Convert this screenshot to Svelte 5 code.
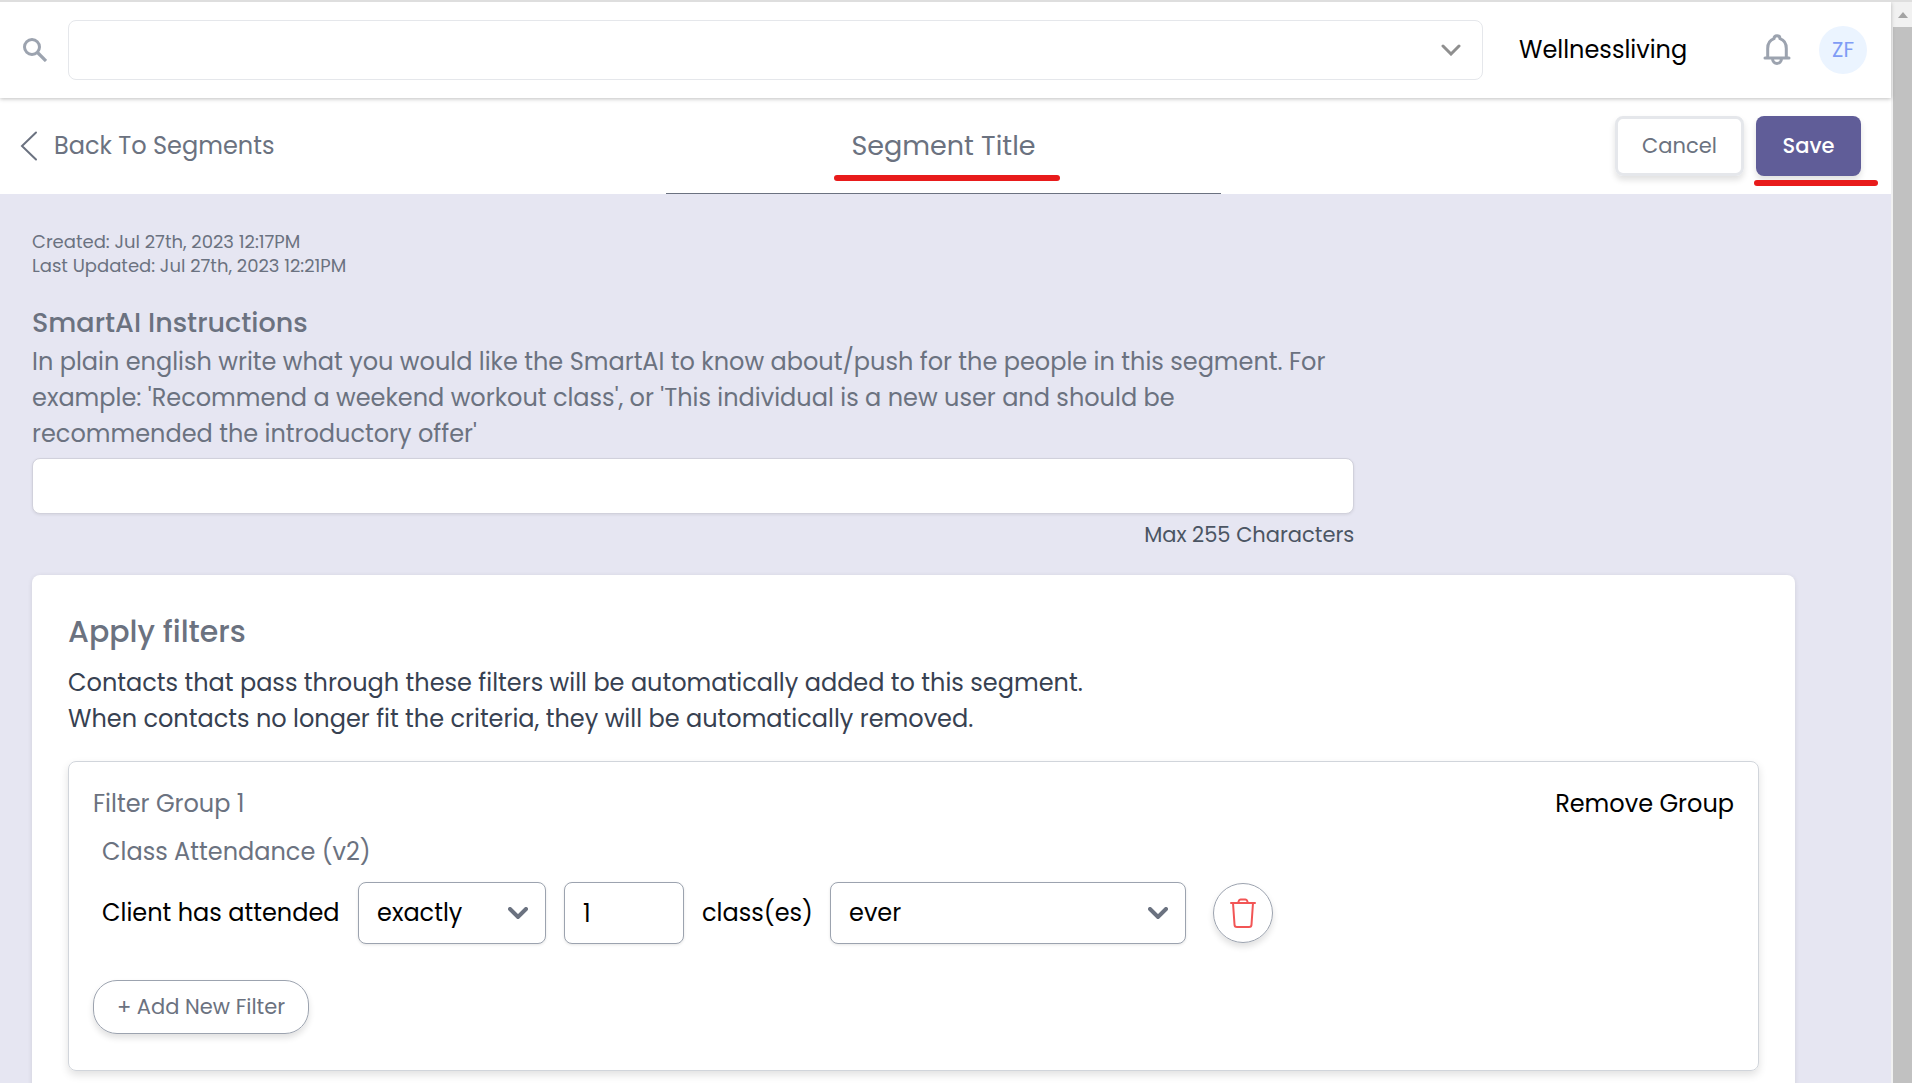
<script lang="ts">
  const account = 'Wellnessliving';
  const created = 'Jul 27th, 2023 12:17PM';
  const updated = 'Jul 27th, 2023 12:21PM';

  let search = $state('');
  let title = $state('Segment Title');
  let instructions = $state('');
  let comparison = $state('exactly');
  let amount = $state('1');
  let period = $state('ever');
</script>

{#snippet chevron()}
  <svg class="chevron" width="20" height="12" viewBox="0 0 20 12" aria-hidden="true">
    <path d="M2 2l8 8 8-8" fill="none" stroke="currentColor" />
  </svg>
{/snippet}

<div class="shell">
  <div class="page">
    <header class="topbar">
      <label class="search-icon" for="search" aria-label="Search">
        <svg width="24" height="24" viewBox="0 0 24 24" aria-hidden="true">
          <circle cx="9" cy="9" r="7.5" fill="none" stroke="currentColor" stroke-width="3" />
          <path d="M14.5 14.5l8.5 8.5" stroke="currentColor" stroke-width="3.2" />
        </svg>
      </label>
      <div class="search-box">
        <input id="search" type="text" bind:value={search} />
        {@render chevron()}
      </div>
      <span class="account">{account}</span>
      <button class="bell" aria-label="Notifications">
        <svg width="28" height="32" viewBox="0 0 28 32" aria-hidden="true">
          <path d="M2 24h24M4.7 24V14.500c0-5 2.500-8.500 6.300-9.800 0-4 6-4 6 0 3.800 1.300 6.300 4.800 6.300 9.800V24M9.500 24.500c0 6.500 9 6.500 9 0" fill="none" stroke="currentColor" stroke-width="3" stroke-linecap="round" stroke-linejoin="round" />
        </svg>
      </button>
      <button class="avatar">ZF</button>
    </header>

    <div class="titlebar">
      <a class="back" href="#segments">
        <svg width="18" height="30" viewBox="0 0 18 30" aria-hidden="true">
          <path d="M16 1.500L2 15l14 13.500" fill="none" stroke="currentColor" stroke-width="2" stroke-linecap="round" />
        </svg>
        Back To Segments
      </a>
      <div class="title-field">
        <input type="text" aria-label="Segment title" bind:value={title} />
        <span class="mark title-mark"></span>
      </div>
      <div class="actions">
        <button class="btn cancel">Cancel</button>
        <button class="btn save">Save<span class="mark save-mark"></span></button>
      </div>
    </div>

    <main>
      <div class="dates">
        <div>Created: {created}</div>
        <div>Last Updated: {updated}</div>
      </div>

      <section class="instructions">
        <h2><label for="instructions">SmartAI Instructions</label></h2>
        <p>
          In plain english write what you would like the SmartAI to know about/push for the people in this segment. For<br />
          example: 'Recommend a weekend workout class', or 'This individual is a new user and should be<br />
          recommended the introductory offer'
        </p>
        <input id="instructions" type="text" maxlength="255" bind:value={instructions} />
        <div class="hint">Max 255 Characters</div>
      </section>

      <section class="card">
        <h1>Apply filters</h1>
        <p>
          Contacts that pass through these filters will be automatically added to this segment.<br />
          When contacts no longer fit the criteria, they will be automatically removed.
        </p>

        <div class="group">
          <div class="group-head">
            <span>Filter Group 1</span>
            <button class="remove">Remove Group</button>
          </div>
          <div class="filter">
            <div class="filter-name">Class Attendance (v2)</div>
            <div class="filter-row">
              <label for="comparison">Client has attended</label>
              <div class="select comparison">
                <select id="comparison" bind:value={comparison}>
                  <option>exactly</option>
                </select>
                {@render chevron()}
              </div>
              <input id="amount" class="amount" type="text" inputmode="numeric" bind:value={amount} />
              <label for="amount">class(es)</label>
              <div class="select period">
                <select aria-label="Period" bind:value={period}>
                  <option>ever</option>
                </select>
                {@render chevron()}
              </div>
              <button class="trash" aria-label="Delete filter">
                <svg width="26" height="30" viewBox="0 0 26 30" aria-hidden="true">
                  <path d="M1 5h24M3 5l1.500 21.500c0 1.500 1 2.500 2.500 2.500h12c1.500 0 2.500-1 2.500-2.500L23 5M8 5l1-2.500q.5-1 1.500-1h5q1 0 1.500 1L18 5" fill="none" stroke="currentColor" stroke-width="2" stroke-linejoin="round" stroke-linecap="round" />
                </svg>
              </button>
            </div>
          </div>
          <button class="add">+ Add New Filter</button>
        </div>
      </section>
    </main>
  </div>

  <div class="scrollbar" aria-hidden="true">
    <svg width="10" height="6" viewBox="0 0 10 6"><path d="M5 0l5 6H0z" fill="#a3a3a3" /></svg>
    <div class="thumb"></div>
  </div>
</div>

<style>
  :global(body) { margin: 0; background: #e6e6f2; }

  .shell { display: flex; height: 100vh; box-sizing: border-box; border-top: 2px solid #dedede; overflow: hidden; font-family: Poppins, Inter, "Liberation Sans", sans-serif; font-size: 24px; line-height: 36px; color: #6b7280; }
  .shell * { box-sizing: border-box; }
  .page { flex: 1; min-width: 0; display: flex; flex-direction: column; white-space: nowrap; }

  input, select, button { margin: 0; font: inherit; color: inherit; border: 0; background: none; outline: none; }
  button, select { cursor: pointer; }
  svg { display: block; flex: none; }
  h1, h2, p { margin: 0; }

  .topbar { flex: none; position: relative; display: flex; align-items: center; height: 96px; padding: 0 24px 0 23px; background: #fff; box-shadow: 0 1px 4px rgba(0, 0, 0, 0.25); }
  .search-icon { margin-right: 21px; color: #9ca3af; }
  .search-box { flex: 1; display: flex; align-items: center; height: 60px; padding-right: 21px; border: 1px solid #e5e7eb; border-radius: 8px; }
  .search-box input { flex: 1; height: 100%; padding: 0 16px; }
  .chevron { stroke-width: 3px; stroke-linecap: round; }
  .search-box .chevron { color: #8f8f8f; }
  .account { width: 168px; margin: 0 76px 0 36px; color: #000; }
  .bell { padding: 0; margin-right: 28px; color: #9ca3af; }
  .avatar { width: 48px; height: 48px; padding: 0; border-radius: 50%; background: #ebf4ff; color: #7f9cf5; font-size: 21px; }

  .titlebar { flex: none; display: grid; grid-template-columns: 1fr 555px 1fr; align-items: center; height: 96px; padding: 0 24px 0 20px; background: #fff; }
  .back { display: flex; align-items: center; gap: 16px; color: inherit; text-decoration: none; }
  .title-field { position: relative; align-self: stretch; }
  .title-field input { width: 100%; height: 100%; padding: 0; border-bottom: 1px solid #6b7280; text-align: center; font-size: 27px; }
  .mark { position: absolute; height: 6px; border-radius: 3px; background: #e81b1b; }
  .title-mark { left: 168px; bottom: 13px; width: 226px; }
  .save-mark { left: -2px; top: 64px; width: 124px; }
  .actions { display: flex; justify-content: flex-end; gap: 12px; padding-right: 6px; }
  .btn { height: 60px; padding: 0; border-radius: 8px; font-size: 21px; box-shadow: 0 4px 6px rgba(0, 0, 0, 0.12); }
  .cancel { width: 129px; border: 3px solid #e5e7eb; }
  .save { position: relative; width: 105px; background: #605d98; color: #fff; font-weight: 500; }

  main { flex: 1; display: flex; flex-direction: column; min-height: 0; padding: 36px 96px 0 32px; background: #e6e6f2; }
  .dates { font-size: 18px; line-height: 24px; }

  .instructions { width: 75%; margin-top: 24px; }
  h2 { font-size: 27px; line-height: 42px; font-weight: 500; }
  .instructions input { display: block; width: 100%; height: 56px; margin-top: 6px; padding: 0 16px; border: 1px solid #d1d1dc; border-radius: 8px; background: #fff; box-shadow: 0 1px 3px rgba(0, 0, 0, 0.08); }
  .hint { margin-top: 5px; font-size: 21px; line-height: 32px; text-align: right; color: #4b5563; }

  .card { flex: 1 0 auto; margin-top: 24px; padding: 36px; border-radius: 8px 8px 0 0; background: #fff; box-shadow: 0 1px 5px rgba(0, 0, 0, 0.1); }
  h1 { margin-bottom: 12px; font-size: 30px; line-height: 42px; font-weight: 500; }
  .card p { color: #374151; }

  .group { margin-top: 24px; padding: 24px; border: 1px solid #d1d5db; border-radius: 8px; box-shadow: 0 4px 8px rgba(0, 0, 0, 0.12); }
  .group-head { display: flex; justify-content: space-between; }
  .remove { padding: 0; color: #000; }
  .filter { padding: 12px 9px 0; }
  .filter-row { display: flex; align-items: center; margin-top: 12px; color: #000; }
  .filter-row label:first-child { width: 256px; }
  .select { position: relative; height: 62px; }
  .select select, .amount { width: 100%; height: 62px; padding: 0 18px; border: 1px solid #9ca3af; border-radius: 8px; background: #fff; box-shadow: 0 1px 3px rgba(0, 0, 0, 0.1); appearance: none; }
  .select .chevron { position: absolute; right: 18px; top: 25px; color: #6b7280; stroke-width: 4px; pointer-events: none; }
  .comparison { width: 188px; margin-right: 18px; }
  .filter-row .amount { width: 120px; margin-right: 18px; }
  .filter-row label[for="amount"] { width: 128px; }
  .period { width: 356px; margin-right: 27px; }
  .trash { display: flex; align-items: center; justify-content: center; width: 60px; height: 60px; padding: 0; border: 1px solid #9ca3af; border-radius: 50%; color: #f25555; box-shadow: 0 4px 6px rgba(0, 0, 0, 0.12); }
  .add { width: 216px; height: 54px; margin: 36px 0 12px; padding: 0; border: 1px solid #9ca3af; border-radius: 24px; font-size: 21px; box-shadow: 0 4px 6px rgba(0, 0, 0, 0.12); }

  .scrollbar { flex: none; display: flex; flex-direction: column; align-items: center; gap: 9px; width: 21px; padding: 10px 0 0 2px; background: #f1f1f1; }
  .thumb { flex: 1; width: 100%; background: #c1c1c1; }
</style>
